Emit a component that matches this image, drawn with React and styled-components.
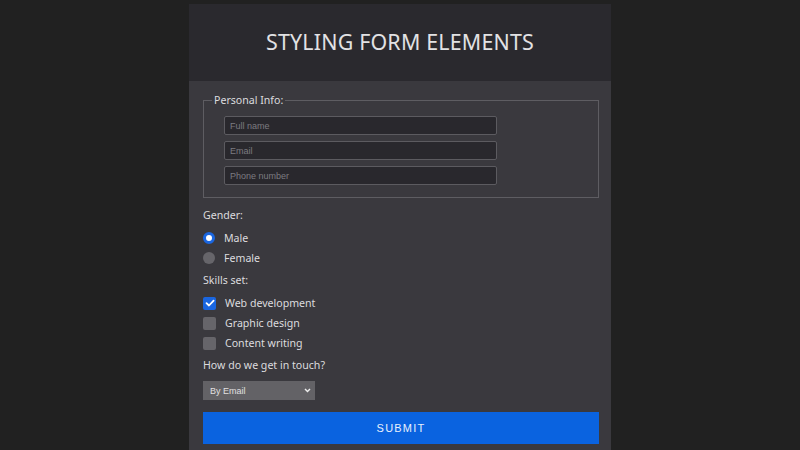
import React from 'react';
import styled, { createGlobalStyle } from 'styled-components';

const GlobalStyle = createGlobalStyle`
  html, body {
    margin: 0;
    padding: 0;
    background: #212121;
    font-family: "Noto Sans", "DejaVu Sans", sans-serif;
  }
`;

const Container = styled.div`
  width: 422px;
  margin: 4px auto 0;
  background: #3a393e;
  height: 446px;
  overflow: hidden;
`;

const Header = styled.header`
  height: 77px;
  background: #2a292e;
  display: flex;
  align-items: center;
  justify-content: center;
`;

const Title = styled.h1`
  margin: 0 0 2px;
  color: #e2e2e4;
  font-size: 21.4px;
  font-weight: 400;
  letter-spacing: 0.2px;
`;

const Form = styled.form`
  padding: 12px 12px 0 14px;
  display: flex;
  flex-direction: column;
  color: #dcdcde;
  font-size: 10.6px;
`;

const Fieldset = styled.fieldset`
  margin: 0;
  border: 1px solid #5e5d62;
  padding: 9px 20px 12px;
  display: flex;
  flex-direction: column;
  gap: 6px;
`;

const Legend = styled.legend`
  padding: 0 2px;
  margin-left: -12px;
  color: #dcdcde;
`;

const TextInput = styled.input`
  width: 273px;
  height: 19px;
  box-sizing: border-box;
  background: #29282d;
  border: 1px solid #5c5b60;
  border-radius: 2px;
  padding: 0 5px;
  color: #ddd;
  font-family: "Liberation Sans", Arial, sans-serif;
  font-size: 9px;
  &::placeholder {
    color: #7c7b80;
  }
`;

const Label = styled.div`
  margin: ${p => p.$top}px 0 0;
  line-height: 14px;
`;

const OptionRow = styled.label`
  display: flex;
  align-items: center;
  height: 14px;
  margin-top: ${p => p.$top}px;
  gap: 9px;
`;

const Radio = styled.span`
  width: 12px;
  height: 12px;
  border-radius: 50%;
  box-sizing: border-box;
  background: ${p => (p.$on ? '#fff' : '#66656a')};
  border: ${p => (p.$on ? '3px solid #1a66e0' : 'none')};
`;

const Check = styled.span`
  width: 13px;
  height: 13px;
  border-radius: 2px;
  background: ${p => (p.$on ? '#1a66e0' : '#66656a')};
  display: flex;
  align-items: center;
  justify-content: center;
`;

const Select = styled.div`
  width: 112px;
  height: 19px;
  margin-top: 9px;
  background: #636266;
  display: flex;
  align-items: center;
  justify-content: space-between;
  padding: 0 4px 0 7px;
  box-sizing: border-box;
  font-family: "Liberation Sans", Arial, sans-serif;
  font-size: 9px;
  color: #e0e0e0;
`;

const Submit = styled.button`
  margin-top: 12px;
  height: 32px;
  background: #0a63e0;
  border: none;
  color: #e8f0fc;
  font-family: "Liberation Sans", Arial, sans-serif;
  font-size: 11px;
  letter-spacing: 1.2px;
`;

const Tick = () => (
  <svg width="10" height="10" viewBox="0 0 10 10">
    <path d="M1.5 5.2 L4 7.5 L8.6 2.6" fill="none" stroke="#fff" strokeWidth="1.8" strokeLinecap="round" strokeLinejoin="round" />
  </svg>
);

const Chevron = () => (
  <svg width="7" height="5" viewBox="0 0 7 5">
    <path d="M1 1 L3.5 3.6 L6 1" fill="none" stroke="#eee" strokeWidth="1.4" />
  </svg>
);

export default function App() {
  return (
    <>
      <GlobalStyle />
      <Container>
        <Header>
          <Title>STYLING FORM ELEMENTS</Title>
        </Header>
        <Form onSubmit={e => e.preventDefault()}>
          <Fieldset>
            <Legend>Personal Info:</Legend>
            <TextInput placeholder="Full name" />
            <TextInput placeholder="Email" />
            <TextInput placeholder="Phone number" />
          </Fieldset>
          <Label $top={10}>Gender:</Label>
          <OptionRow $top={9}><Radio $on />Male</OptionRow>
          <OptionRow $top={6}><Radio />Female</OptionRow>
          <Label $top={8}>Skills set:</Label>
          <OptionRow $top={9}><Check $on><Tick /></Check>Web development</OptionRow>
          <OptionRow $top={6}><Check />Graphic design</OptionRow>
          <OptionRow $top={6}><Check />Content writing</OptionRow>
          <Label $top={8}>How do we get in touch?</Label>
          <Select>By Email<Chevron /></Select>
          <Submit type="submit">SUBMIT</Submit>
        </Form>
      </Container>
    </>
  );
}
